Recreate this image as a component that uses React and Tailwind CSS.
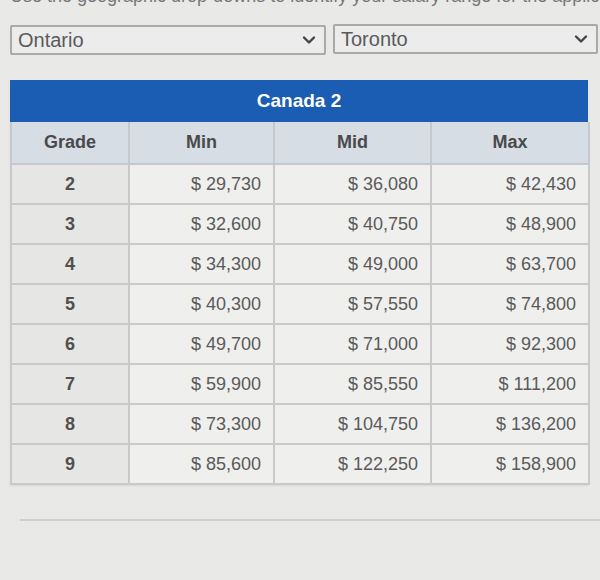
import React from 'react';

const rows = [
  ['2', '$ 29,730', '$ 36,080', '$ 42,430'],
  ['3', '$ 32,600', '$ 40,750', '$ 48,900'],
  ['4', '$ 34,300', '$ 49,000', '$ 63,700'],
  ['5', '$ 40,300', '$ 57,550', '$ 74,800'],
  ['6', '$ 49,700', '$ 71,000', '$ 92,300'],
  ['7', '$ 59,900', '$ 85,550', '$ 111,200'],
  ['8', '$ 73,300', '$ 104,750', '$ 136,200'],
  ['9', '$ 85,600', '$ 122,250', '$ 158,900'],
];

function Chevron() {
  return (
    <svg width="14" height="10" viewBox="0 0 14 10" className="shrink-0">
      <path d="M2 2.5 L7 7.5 L12 2.5" fill="none" stroke="#444" strokeWidth="2.4" strokeLinecap="round" strokeLinejoin="round" />
    </svg>
  );
}

function Select({ label, className }) {
  return (
    <div className={`h-[30px] border-2 border-[#a9a9a9] rounded-[2px] bg-[#ececec] flex items-center justify-between pl-[6px] pr-[8px] ${className}`}>
      <span className="text-[20px] text-[#5a5a5a] leading-none">{label}</span>
      <Chevron />
    </div>
  );
}

export default function App() {
  return (
    <div
      className="w-[600px] h-[580px] overflow-hidden bg-[#e9e9e8]"
      style={{ fontFamily: '"Liberation Sans", Arial, sans-serif' }}
    >
      {/* cut-off intro line */}
      <div className="h-[8px] overflow-hidden pl-[10px]">
        <div className="-mt-[14px] text-[18px] leading-[20px] text-[#777] whitespace-nowrap">
          Use the geographic drop-downs to identify your salary range for the applicable
        </div>
      </div>

      {/* selects */}
      <div className="mt-[16px] flex items-start gap-[7px] pl-[10px] pr-[2px]">
        <Select label="Ontario" className="w-[316px] mt-[1px]" />
        <Select label="Toronto" className="flex-1" />
      </div>

      {/* table */}
      <div className="mt-[25px] ml-[10px] w-[578px] shadow-[0_1px_2px_rgba(0,0,0,0.08)]">
        <div className="h-[42px] bg-[#1b5db3] flex items-center justify-center">
          <span className="text-white font-bold text-[19px]">Canada 2</span>
        </div>
        <table className="w-full border-collapse table-fixed text-[18px]">
          <colgroup>
            <col className="w-[118px]" />
            <col className="w-[145px]" />
            <col className="w-[157px]" />
            <col className="w-[158px]" />
          </colgroup>
          <thead>
            <tr className="h-[42px] bg-[#d6dde5]">
              {['Grade', 'Min', 'Mid', 'Max'].map((h) => (
                <th key={h} className="border-2 border-t-0 border-[#c4c9ce] font-bold text-[#4a4a4a] text-center">
                  {h}
                </th>
              ))}
            </tr>
          </thead>
          <tbody>
            {rows.map((r) => (
              <tr key={r[0]} className="h-[40px]">
                <td className="border-2 border-[#c9c9c9] bg-[#e6e6e5] text-center font-bold text-[#505050]">
                  {r[0]}
                </td>
                {r.slice(1).map((v, i) => (
                  <td key={i} className="border-2 border-[#c9c9c9] bg-[#efefee] text-right pr-[12px] text-[#5a5a5a]">
                    {v}
                  </td>
                ))}
              </tr>
            ))}
          </tbody>
        </table>
      </div>

      {/* divider */}
      <div className="mt-[34px] ml-[20px] h-[2px] bg-[#cfcfcf]" />
    </div>
  );
}
